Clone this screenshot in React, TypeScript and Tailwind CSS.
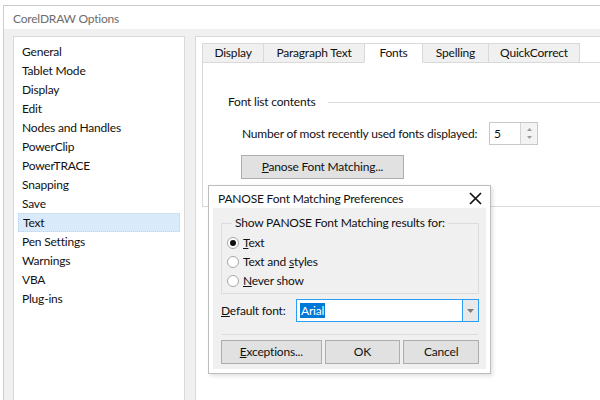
import React from "react";

const items = [
  "General",
  "Tablet Mode",
  "Display",
  "Edit",
  "Nodes and Handles",
  "PowerClip",
  "PowerTRACE",
  "Snapping",
  "Save",
  "Text",
  "Pen Settings",
  "Warnings",
  "VBA",
  "Plug-ins",
];

const tabs = [
  { label: "Display", w: "w-[62px]" },
  { label: "Paragraph Text", w: "w-[102px]" },
  { label: "Fonts", w: "w-[59px]", active: true },
  { label: "Spelling", w: "w-[67px]" },
  { label: "QuickCorrect", w: "w-[92px]" },
];

function Radio({ checked, children }: { checked?: boolean; children: React.ReactNode }) {
  return (
    <div className="flex items-center h-[19px]">
      <span className="w-[12px] h-[12px] rounded-full border border-[#a8a8a8] bg-white flex items-center justify-center">
        {checked && <span className="w-[6px] h-[6px] rounded-full bg-[#111]" />}
      </span>
      <span className="ml-[4px]">{children}</span>
    </div>
  );
}

function Btn({ className, children }: { className: string; children: React.ReactNode }) {
  return (
    <div
      className={`h-[24px] bg-[#e1e1e1] border border-[#adadad] flex items-center justify-center ${className}`}
    >
      {children}
    </div>
  );
}

export default function App() {
  return (
    <div className="relative w-[600px] h-[400px] overflow-hidden bg-white text-[12px] tracking-[-0.2px] text-[#111] font-['Lato',sans-serif] leading-none">
      {/* main window */}
      <div className="ml-[3px] mt-[5px] w-[640px] h-[440px] border-l border-t border-[#cccccc] flex flex-col">
        <div className="h-[23px] shrink-0 bg-white text-[#6d6d6d] pl-[9px] flex items-center pt-[2px]">
          CorelDRAW Options
        </div>
        <div className="flex-1 bg-[#f0f0f0] pt-[7px] pl-[9px] flex gap-[10px]">
          {/* left list */}
          <div className="w-[172px] shrink-0 h-[400px] bg-white border border-[#d9d9d9] pt-[5px] px-[4px]">
            {items.map((it) => (
              <div
                key={it}
                className={`h-[19px] flex items-center pl-[4px] ${
                  it === "Text" ? "bg-[#d9ebfb] border border-dotted border-[#b8d6f0] pl-[3px]" : ""
                }`}
              >
                {it}
              </div>
            ))}
          </div>
          {/* right panel */}
          <div className="w-[460px] shrink-0 h-[400px] bg-white border border-[#d9d9d9] pt-[6px] pl-[6px]">
            <div className="flex h-[20px]">
              {tabs.map((t, i) => (
                <div
                  key={t.label}
                  className={`${t.w} ${i > 0 ? "-ml-px" : ""} h-[20px] border border-[#d9d9d9] flex items-center justify-center ${
                    t.active ? "bg-white border-b-white relative z-10" : "bg-[#f0f0f0]"
                  }`}
                >
                  {t.label}
                </div>
              ))}
              <div className="flex-1 border-b border-[#d9d9d9]" />
            </div>
            <div className="h-[144px] border-l border-b border-[#d9d9d9] bg-white pl-[25px] pt-[31px]">
              <div className="flex items-center h-[16px]">
                <span className="w-[100px] shrink-0">Font list contents</span>
                <span className="flex-1 h-px bg-[#dcdcdc]" />
              </div>
              <div className="flex items-center mt-[12px] ml-[14px] h-[23px]">
                <span className="w-[247px] shrink-0 whitespace-nowrap">Number of most recently used fonts displayed:</span>
                <div className="w-[49px] h-[23px] border border-[#c8c8c8] flex bg-white">
                  <div className="flex-1 flex items-center pl-[4px]">5</div>
                  <div className="w-[17px] border-l border-[#d4d4d4] bg-[#f3f3f3] flex flex-col items-center justify-center gap-[5px]">
                    <svg width="5" height="3" viewBox="0 0 5 3">
                      <path d="M0 3 L2.5 0 L5 3 Z" fill="#9a9a9a" />
                    </svg>
                    <svg width="5" height="3" viewBox="0 0 5 3">
                      <path d="M0 0 L2.5 3 L5 0 Z" fill="#9a9a9a" />
                    </svg>
                  </div>
                </div>
              </div>
              <Btn className="w-[163px] ml-[13px] mt-[10px]">
                <span>
                  <span className="underline">P</span>anose Font Matching...
                </span>
              </Btn>
            </div>
          </div>
        </div>
      </div>

      {/* modal dialog */}
      <div className="absolute left-[208px] top-[185px] w-[283px] h-[189px] bg-white border border-[#bdbdbd] shadow-[2px_2px_4px_rgba(0,0,0,0.12)] flex flex-col">
        <div className="h-[22px] shrink-0 flex items-center justify-between pl-[9px] pr-[8px] pt-[3px]">
          <span>PANOSE Font Matching Preferences</span>
          <svg width="13" height="13" viewBox="0 0 13 13">
            <path d="M1 1 L12 12 M12 1 L1 12" stroke="#111" strokeWidth="1.7" />
          </svg>
        </div>
        <div className="flex-1 mx-[4px] mb-[4px] bg-[#f0f0f0] pl-[8px] pr-[7px] pt-[7px]">
          <fieldset className="border border-[#dcdcdc] pl-[5px] h-[79px]">
            <legend className="ml-[5px] px-[3px] h-[16px] leading-[16px]">
              Show PANOSE Font Matching results for:
            </legend>
            <div className="pt-[2px]">
              <Radio checked>
                <span className="underline">T</span>ext
              </Radio>
              <Radio>
                Text and <span className="underline">s</span>tyles
              </Radio>
              <Radio>
                <span className="underline">N</span>ever show
              </Radio>
            </div>
          </fieldset>
          <div className="flex items-center mt-[5px] h-[23px]">
            <span className="w-[75px] shrink-0">
              <span className="underline">D</span>efault font:
            </span>
            <div className="w-[183px] h-[23px] border border-[#2a9df4] flex bg-white">
              <div className="flex-1 flex items-center pl-[3px]">
                <span className="bg-[#0078d7] text-white h-[15px] px-[1px] flex items-center">Arial</span>
              </div>
              <div className="w-[16px] border-l border-[#2a9df4] bg-[#e8e8e8] flex items-center justify-center">
                <svg width="7" height="4" viewBox="0 0 7 4">
                  <path d="M0 0 L3.5 4 L7 0 Z" fill="#7a7a7a" />
                </svg>
              </div>
            </div>
          </div>
          <div className="h-px bg-[#dcdcdc] mt-[12px] ml-[1px] mr-[1px]" />
          <div className="flex gap-[3px] mt-[5px]">
            <Btn className="w-[101px]">
              <span>
                <span className="underline">E</span>xceptions...
              </span>
            </Btn>
            <Btn className="w-[76px]">OK</Btn>
            <Btn className="w-[76px]">Cancel</Btn>
          </div>
        </div>
      </div>
    </div>
  );
}
